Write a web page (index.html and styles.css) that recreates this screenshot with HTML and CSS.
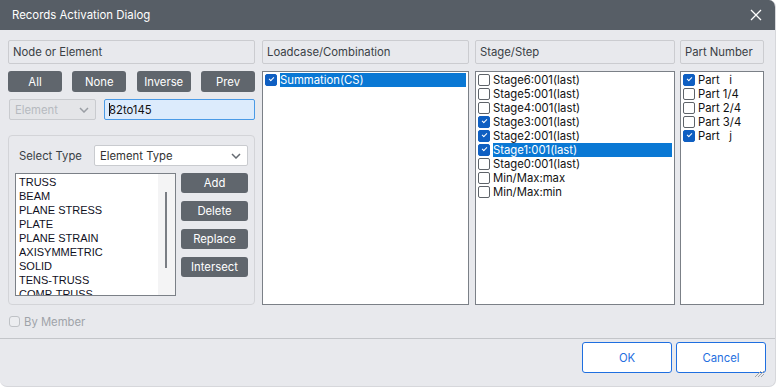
FILE: index.html
```html
<!DOCTYPE html>
<html>
<head>
<meta charset="utf-8">
<link rel="stylesheet" href="styles.css">
</head>
<body>
<div class="dialog">
  <div class="titlebar">
    <span class="title">Records Activation Dialog</span>
    <svg class="close" width="12" height="12" viewBox="0 0 12 12"><path d="M1 1L11 11M11 1L1 11" stroke="#fff" stroke-width="1.3" fill="none"/></svg>
  </div>
  <div class="content">
    <div class="col col-node">
      <div class="header">Node or Element</div>
      <div class="btnrow">
        <button class="btn">All</button>
        <button class="btn">None</button>
        <button class="btn">Inverse</button>
        <button class="btn">Prev</button>
      </div>
      <div class="elrow">
        <div class="select disabled"><span>Element</span><svg class="chev" width="10" height="6" viewBox="0 0 10 6"><path d="M1 1L5 5L9 1" stroke="currentColor" stroke-width="1.5" fill="none"/></svg></div>
        <div class="input"><span class="caret"></span>82to145</div>
      </div>
      <div class="group">
        <div class="typerow">
          <span class="label">Select Type</span>
          <div class="select type"><span>Element Type</span><svg class="chev" width="10" height="6" viewBox="0 0 10 6"><path d="M1 1L5 5L9 1" stroke="currentColor" stroke-width="1.5" fill="none"/></svg></div>
        </div>
        <div class="typebody">
          <div class="ellist">
            <div class="items">
              <div>TRUSS</div>
              <div>BEAM</div>
              <div>PLANE STRESS</div>
              <div>PLATE</div>
              <div>PLANE STRAIN</div>
              <div>AXISYMMETRIC</div>
              <div>SOLID</div>
              <div>TENS-TRUSS</div>
              <div>COMP-TRUSS</div>
            </div>
            <div class="track"><div class="thumb"></div></div>
          </div>
          <div class="sidebtns">
            <button class="btn">Add</button>
            <button class="btn">Delete</button>
            <button class="btn">Replace</button>
            <button class="btn">Intersect</button>
          </div>
        </div>
      </div>
    </div>
    <div class="col col-load">
      <div class="header">Loadcase/Combination</div>
      <div class="list">
        <div class="row"><span class="cb on"></span><span class="txt sel">Summation(CS)</span></div>
      </div>
    </div>
    <div class="col col-stage">
      <div class="header">Stage/Step</div>
      <div class="list">
        <div class="row"><span class="cb"></span><span class="txt">Stage6:001(last)</span></div>
        <div class="row"><span class="cb"></span><span class="txt">Stage5:001(last)</span></div>
        <div class="row"><span class="cb"></span><span class="txt">Stage4:001(last)</span></div>
        <div class="row"><span class="cb on"></span><span class="txt">Stage3:001(last)</span></div>
        <div class="row"><span class="cb on"></span><span class="txt">Stage2:001(last)</span></div>
        <div class="row"><span class="cb on"></span><span class="txt sel">Stage1:001(last)</span></div>
        <div class="row"><span class="cb"></span><span class="txt">Stage0:001(last)</span></div>
        <div class="row"><span class="cb"></span><span class="txt">Min/Max:max</span></div>
        <div class="row"><span class="cb"></span><span class="txt">Min/Max:min</span></div>
      </div>
    </div>
    <div class="col col-part">
      <div class="header">Part Number</div>
      <div class="list">
        <div class="row"><span class="cb on"></span><span class="txt pre">Part   i</span></div>
        <div class="row"><span class="cb"></span><span class="txt">Part 1/4</span></div>
        <div class="row"><span class="cb"></span><span class="txt">Part 2/4</span></div>
        <div class="row"><span class="cb"></span><span class="txt">Part 3/4</span></div>
        <div class="row"><span class="cb on"></span><span class="txt pre">Part   j</span></div>
      </div>
    </div>
  </div>
  <div class="bymember"><span class="cb dis"></span><span>By Member</span></div>
  <div class="footer">
    <button class="fbtn">OK</button>
    <button class="fbtn">Cancel</button>
    <svg class="grip" width="10" height="8" viewBox="0 0 10 8"><path d="M3 7L9 1M6 7L9 4M0 7L6 1" stroke="#a0a4aa" stroke-width="1" fill="none"/></svg>
  </div>
</div>
</body>
</html>
```
FILE: styles.css
```css
* { box-sizing: border-box; }
html, body { margin: 0; padding: 0; background: #ffffff; }
body { font-family: Inter, "Noto Sans", "DejaVu Sans", sans-serif; font-size: 11.3px; color: #222; }
button { font-family: inherit; }

.dialog {
  width: 776px;
  height: 387px;
  background: #e8e9ed;
  border-radius: 0 7px 7px 7px;
  overflow: hidden;
  position: relative;
  display: flex;
  flex-direction: column;
  border-right: 1px solid #d6d7db;
  border-bottom: 1px solid #d6d7db;
}

.titlebar {
  height: 30px;
  flex: none;
  background: #575e66;
  color: #fff;
  display: flex;
  align-items: center;
  justify-content: space-between;
  padding: 0 13px 0 12px;
  font-size: 11.4px;
}
.close { display: block; }

.content {
  display: flex;
  padding: 10px 0 0 8px;
  height: 275px;
  flex: none;
}
.col { display: flex; flex-direction: column; gap: 7px; min-height: 0; }
.col-node { width: 247px; margin-right: 7px; }
.col-load { width: 207px; margin-right: 6px; }
.col-stage { width: 200px; margin-right: 5px; }
.col-part { width: 84px; }

.header {
  height: 24px;
  flex: none;
  border: 1px solid #cbccd0;
  border-radius: 2px;
  padding-left: 4px;
  display: flex;
  align-items: center;
  color: #3a3f45;
}

.btnrow { display: flex; justify-content: space-between; height: 21px; flex: none; }
.btn {
  background: #60666d;
  color: #fff;
  border: none;
  border-radius: 3px;
  font-size: 11.3px;
  padding: 0;
  height: 21px;
  width: 54px;
}

.elrow { display: flex; height: 21px; flex: none; gap: 8px; margin-bottom: 8px; }
.select {
  display: flex;
  align-items: center;
  justify-content: space-between;
  border: 1px solid #c9cbcf;
  border-radius: 2px;
  padding: 0 6px 0 5px;
  background: #fff;
}
.select.disabled { width: 87px; margin-left: 1px; background: #e4e5e8; color: #b6bac0; }
.select.disabled .chev { color: #9a9ea4; }
.chev { color: #666b72; }
.input {
  flex: 1;
  border: 1px solid #4a9ae6;
  border-radius: 2px;
  background: #dcebfc;
  display: flex;
  align-items: center;
  padding-left: 4px;
  color: #111;
}
.caret { width: 1px; height: 13px; background: #111; margin-right: -1px; }

.group {
  height: 170px;
  flex: none;
  border: 1px solid #d3d4d8;
  border-radius: 4px;
  padding: 9px 6px 8px 6px;
  display: flex;
  flex-direction: column;
  gap: 7px;
}
.typerow { display: flex; align-items: center; height: 21px; flex: none; }
.label { width: 79px; padding-left: 4px; color: #3a3f45; }
.select.type { flex: 1; height: 21px; color: #333; }

.typebody { display: flex; gap: 5px; height: 123px; flex: none; }
.ellist {
  width: 161px;
  height: 123px;
  border: 1px solid #7b8087;
  background: #fff;
  display: flex;
  overflow: hidden;
}
.items {
  flex: 1;
  padding: 1px 0 0 3px;
  font-family: "Liberation Sans", Arial, sans-serif;
  font-size: 11px;
  color: #10101e;
  line-height: 14px;
  overflow: hidden;
}
.track { width: 17px; background: #f4f4f5; position: relative; }
.thumb { position: absolute; left: 7px; top: 18px; width: 2px; height: 76px; background: #7a7e84; }
.sidebtns { display: flex; flex-direction: column; gap: 8px; }
.sidebtns .btn { width: 67px; height: 20px; }

.list {
  flex: 1;
  border: 1px solid #7b8087;
  background: #fff;
  padding: 1px 2px 0 2px;
}
.row { display: flex; align-items: center; height: 14px; }
.cb {
  width: 12px;
  height: 12px;
  flex: none;
  border: 1px solid #5e6369;
  border-radius: 2px;
  background: #fff;
  margin-right: 3px;
  position: relative;
}
.cb.on { background: #0f5fc2; border-color: #0f5fc2; }
.cb.on::after {
  content: "";
  position: absolute;
  left: 3px;
  top: 2px;
  width: 4px;
  height: 2px;
  border-left: 1px solid #fff;
  border-bottom: 1px solid #fff;
  transform: rotate(-45deg);
}
.txt { flex: 1; height: 14px; line-height: 14px; color: #111; white-space: nowrap; }
.txt.pre { white-space: pre; }
.txt.sel { background: #0a78d4; color: #fff; }

.bymember {
  height: 33px;
  flex: none;
  display: flex;
  align-items: center;
  padding-left: 9px;
  color: #9fa3a9;
}
.cb.dis { border-color: #bfc2c6; background: #ecedf0; width: 11px; height: 11px; margin-right: 4px; border-radius: 3px; }

.footer {
  border-top: 1px solid #c3c5c9;
  flex: 1;
  display: flex;
  justify-content: flex-end;
  align-items: flex-start;
  padding: 3px 9px 0 0;
  gap: 4px;
  position: relative;
}
.fbtn {
  width: 90px;
  height: 31px;
  background: #fff;
  border: 1px solid #1f6fe0;
  border-radius: 3px;
  color: #1f6fe0;
  font-size: 11.3px;
}
.grip { position: absolute; right: 10px; bottom: 8px; }
```
